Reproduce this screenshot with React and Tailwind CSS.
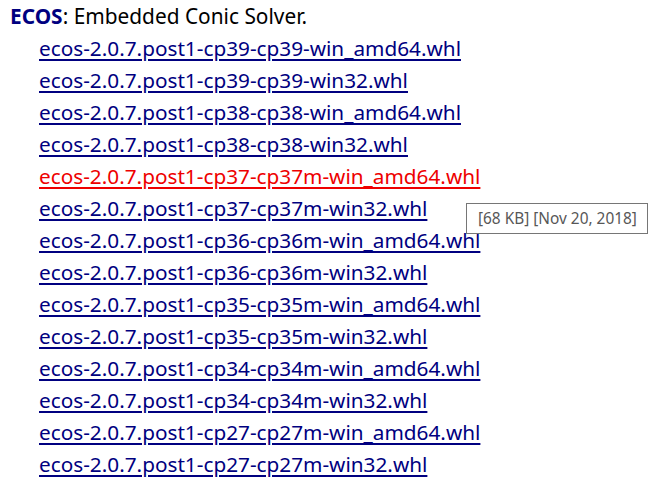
import React from "react";

const files = [
  "ecos-2.0.7.post1-cp39-cp39-win_amd64.whl",
  "ecos-2.0.7.post1-cp39-cp39-win32.whl",
  "ecos-2.0.7.post1-cp38-cp38-win_amd64.whl",
  "ecos-2.0.7.post1-cp38-cp38-win32.whl",
  "ecos-2.0.7.post1-cp37-cp37m-win_amd64.whl",
  "ecos-2.0.7.post1-cp37-cp37m-win32.whl",
  "ecos-2.0.7.post1-cp36-cp36m-win_amd64.whl",
  "ecos-2.0.7.post1-cp36-cp36m-win32.whl",
  "ecos-2.0.7.post1-cp35-cp35m-win_amd64.whl",
  "ecos-2.0.7.post1-cp35-cp35m-win32.whl",
  "ecos-2.0.7.post1-cp34-cp34m-win_amd64.whl",
  "ecos-2.0.7.post1-cp34-cp34m-win32.whl",
  "ecos-2.0.7.post1-cp27-cp27m-win_amd64.whl",
  "ecos-2.0.7.post1-cp27-cp27m-win32.whl",
];

export default function App() {
  return (
    <div className="relative w-[667px] h-[486px] overflow-hidden bg-white font-['Noto_Sans',sans-serif] text-[20.75px] leading-[32px]">
      <div className="pl-[10px] text-[20.85px]">
        <span className="font-bold text-[#000080]">ECOS</span>
        <span className="text-black">: Embedded Conic Solver.</span>
      </div>
      <ul className="flex flex-col pl-[39px]">
        {files.map((f, i) => (
          <li key={f}>
            <a
              href="#"
              className={`underline underline-offset-[3px] ${i === 4 ? "text-[#ee0000]" : "text-[#000080]"}`}
            >
              {f}
            </a>
          </li>
        ))}
      </ul>
      <div className="absolute left-[466px] top-[203px] w-[182px] h-[31px] border border-[#767676] bg-white flex items-center pl-[11px] text-[15.4px] leading-none text-[#575757]">
        [68 KB] [Nov 20, 2018]
      </div>
    </div>
  );
}
